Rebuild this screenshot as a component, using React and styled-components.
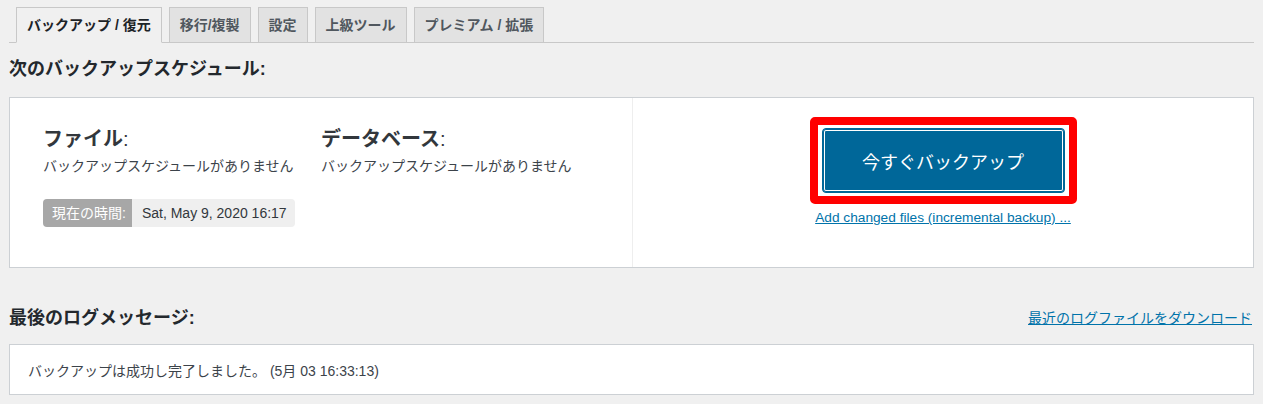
import React from "react";
import styled, { createGlobalStyle } from "styled-components";

const Global = createGlobalStyle`
  html, body { margin: 0; padding: 0; background: #f0f0f0; }
  body {
    font-family: "Liberation Sans", "Noto Sans CJK JP", sans-serif;
    color: #3c434a;
    -webkit-font-smoothing: antialiased;
  }
`;

const Page = styled.div`
  padding: 7px 9px 0;
`;

const TabBar = styled.nav`
  display: flex;
  gap: 7px;
  padding-left: 7px;
  border-bottom: 1px solid #c8c8c8;
`;

const Tab = styled.a`
  display: block;
  padding: 5px 10px;
  line-height: 24px;
  font-size: 14px;
  font-weight: 700;
  border: 1px solid #c8c8c8;
  margin-bottom: -1px;
  background: ${(p) => (p.$active ? "#f0f0f0" : "#e2e2e2")};
  border-bottom-color: ${(p) => (p.$active ? "#f0f0f0" : "#c8c8c8")};
  color: ${(p) => (p.$active ? "#1d2327" : "#50575e")};
  text-decoration: none;
  cursor: pointer;
`;

const SectionTitle = styled.h3`
  margin: 0;
  font-size: 18px;
  line-height: 24px;
  font-weight: 700;
  color: #23282d;
`;

const FirstTitle = styled(SectionTitle)`
  margin: 14px 0 16px;
`;

const Panel = styled.div`
  display: grid;
  grid-template-columns: 622px 1fr;
  background: #fff;
  border: 1px solid #ccd0d4;
  height: 169px;
`;

const Schedules = styled.div`
  padding: 28px 0 0 33px;
`;

const Columns = styled.div`
  display: flex;
`;

const Column = styled.div`
  width: 278px;
`;

const ColumnTitle = styled.div`
  font-size: 20px;
  line-height: 26px;
  font-weight: 700;
  color: #32373c;
`;

const Colon = styled.span`
  font-weight: 400;
`;

const Note = styled.div`
  margin-top: 4px;
  font-size: 14px;
  line-height: 20px;
  color: #3c434a;
`;

const Clock = styled.div`
  display: inline-flex;
  margin-top: 23px;
  height: 28px;
  border-radius: 4px;
  overflow: hidden;
  font-size: 14px;
  line-height: 28px;
`;

const ClockLabel = styled.span`
  background: #a7a7a7;
  color: #fff;
  padding: 0 6px 0 9px;
`;

const ClockValue = styled.span`
  background: #efefef;
  color: #32373c;
  padding: 0 8px 0 10px;
`;

const Actions = styled.div`
  border-left: 1px solid #eeeeee;
  display: flex;
  flex-direction: column;
  align-items: center;
  padding-top: 19px;
`;

const Highlight = styled.div`
  border: 8px solid #ff0000;
  border-radius: 5px;
  padding: 3px 4px;
`;

const BackupButton = styled.button`
  width: 243px;
  height: 65px;
  border: 1px solid #006799;
  border-radius: 4px;
  background: #006799;
  box-shadow: inset 0 0 0 1px #006799, inset 0 0 0 2px #ffffff;
  color: #fff;
  font-family: "Liberation Sans", "Noto Sans CJK JP", sans-serif;
  font-size: 18px;
  cursor: pointer;
`;

const Link = styled.a`
  color: #0073aa;
  text-decoration: underline;
  cursor: pointer;
  font-size: ${(p) => p.$size || 14}px;
  line-height: ${(p) => Math.round((p.$size || 14) + 4)}px;
`;

const IncrementalLink = styled(Link)`
  margin-top: 5px;
`;

const LogHeader = styled.div`
  display: flex;
  justify-content: space-between;
  align-items: center;
  margin: 38px 2px 14px 0;
`;

const LogBox = styled.div`
  background: #fff;
  border: 1px solid #ccd0d4;
  height: 49px;
  display: flex;
  align-items: center;
  padding-left: 18px;
  font-size: 14px;
  color: #3c434a;
`;

export default function App() {
  return (
    <>
      <Global />
      <Page>
        <TabBar>
          <Tab $active>バックアップ / 復元</Tab>
          <Tab>移行/複製</Tab>
          <Tab>設定</Tab>
          <Tab>上級ツール</Tab>
          <Tab>プレミアム / 拡張</Tab>
        </TabBar>

        <FirstTitle>次のバックアップスケジュール:</FirstTitle>

        <Panel>
          <Schedules>
            <Columns>
              <Column>
                <ColumnTitle>
                  ファイル<Colon>:</Colon>
                </ColumnTitle>
                <Note>バックアップスケジュールがありません</Note>
              </Column>
              <Column>
                <ColumnTitle>
                  データベース<Colon>:</Colon>
                </ColumnTitle>
                <Note>バックアップスケジュールがありません</Note>
              </Column>
            </Columns>
            <Clock>
              <ClockLabel>現在の時間:</ClockLabel>
              <ClockValue>Sat, May 9, 2020 16:17</ClockValue>
            </Clock>
          </Schedules>
          <Actions>
            <Highlight>
              <BackupButton>今すぐバックアップ</BackupButton>
            </Highlight>
            <IncrementalLink $size={13.7}>
              Add changed files (incremental backup) ...
            </IncrementalLink>
          </Actions>
        </Panel>

        <LogHeader>
          <SectionTitle>最後のログメッセージ:</SectionTitle>
          <Link>最近のログファイルをダウンロード</Link>
        </LogHeader>

        <LogBox>バックアップは成功し完了しました。 (5月 03 16:33:13)</LogBox>
      </Page>
    </>
  );
}
